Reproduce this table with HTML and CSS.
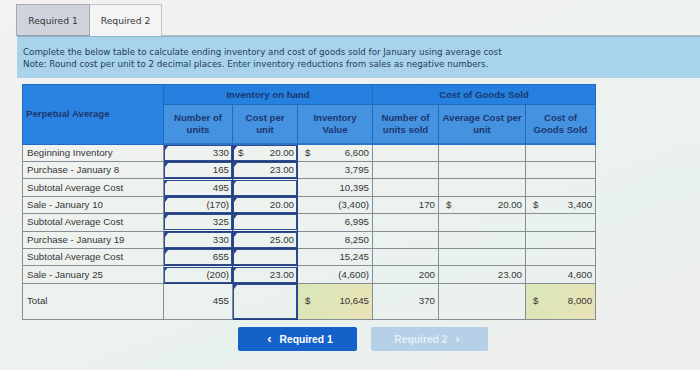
FILE: index.html
```html
<!DOCTYPE html>
<html>
<head>
<meta charset="utf-8">
<link rel="stylesheet" href="styles.css">
</head>
<body>
<div class="tabs">
  <div class="tab tab-off">Required 1</div>
  <div class="tab tab-on">Required 2</div>
  <div class="tab-rest"></div>
</div>
<div class="note">
  <p>Complete the below table to calculate ending inventory and cost of goods sold for January using average cost</p>
  <p>Note: Round cost per unit to 2 decimal places. Enter inventory reductions from sales as negative numbers.</p>
</div>
<table class="grid">
  <colgroup>
    <col class="c1"><col class="c2"><col class="c3"><col class="c4"><col class="c5"><col class="c6"><col class="c7">
  </colgroup>
  <thead>
    <tr class="h1">
      <th rowspan="2" class="left">Perpetual Average</th>
      <th colspan="3">Inventory on hand</th>
      <th colspan="3">Cost of Goods Sold</th>
    </tr>
    <tr class="h2">
      <th>Number of<br>units</th>
      <th>Cost per<br>unit</th>
      <th>Inventory<br>Value</th>
      <th>Number of<br>units sold</th>
      <th>Average Cost per<br>unit</th>
      <th>Cost of<br>Goods Sold</th>
    </tr>
  </thead>
  <tbody>
    <tr>
      <td class="lbl">Beginning Inventory</td>
      <td class="inp"><span class="fld">330</span></td>
      <td class="inp"><span class="fld"><span class="cur">$</span>20.00</span></td>
      <td class="num"><span class="cur">$</span>6,600</td>
      <td></td><td></td><td></td>
    </tr>
    <tr>
      <td class="lbl">Purchase - January 8</td>
      <td class="inp"><span class="fld">165</span></td>
      <td class="inp"><span class="fld">23.00</span></td>
      <td class="num">3,795</td>
      <td></td><td></td><td></td>
    </tr>
    <tr>
      <td class="lbl">Subtotal Average Cost</td>
      <td class="inp"><span class="fld">495</span></td>
      <td class="inp"><span class="fld"></span></td>
      <td class="num">10,395</td>
      <td></td><td></td><td></td>
    </tr>
    <tr>
      <td class="lbl">Sale - January 10</td>
      <td class="inp"><span class="fld">(170)</span></td>
      <td class="inp"><span class="fld">20.00</span></td>
      <td class="num">(3,400)</td>
      <td class="num">170</td>
      <td class="num"><span class="cur">$</span>20.00</td>
      <td class="num"><span class="cur">$</span>3,400</td>
    </tr>
    <tr>
      <td class="lbl">Subtotal Average Cost</td>
      <td class="inp"><span class="fld">325</span></td>
      <td class="inp"><span class="fld"></span></td>
      <td class="num">6,995</td>
      <td></td><td></td><td></td>
    </tr>
    <tr>
      <td class="lbl">Purchase - January 19</td>
      <td class="inp"><span class="fld">330</span></td>
      <td class="inp"><span class="fld">25.00</span></td>
      <td class="num">8,250</td>
      <td></td><td></td><td></td>
    </tr>
    <tr>
      <td class="lbl">Subtotal Average Cost</td>
      <td class="inp"><span class="fld">655</span></td>
      <td class="inp"><span class="fld"></span></td>
      <td class="num">15,245</td>
      <td></td><td></td><td></td>
    </tr>
    <tr>
      <td class="lbl">Sale - January 25</td>
      <td class="inp"><span class="fld">(200)</span></td>
      <td class="inp"><span class="fld">23.00</span></td>
      <td class="num">(4,600)</td>
      <td class="num">200</td>
      <td class="num">23.00</td>
      <td class="num">4,600</td>
    </tr>
    <tr class="total">
      <td class="lbl">Total</td>
      <td class="num">455</td>
      <td class="inp"><span class="fld"></span></td>
      <td class="num hl"><span class="cur">$</span>10,645</td>
      <td class="num">370</td>
      <td></td>
      <td class="num hl"><span class="cur">$</span>8,000</td>
    </tr>
  </tbody>
</table>
<div class="nav">
  <button class="btn btn-prev"><span class="chev">&lsaquo;</span> Required 1</button>
  <button class="btn btn-next">Required 2 <span class="chev">&rsaquo;</span></button>
</div>
</body>
</html>
```
FILE: styles.css
```css
html, body {
  margin: 0;
  padding: 0;
}
body {
  width: 700px;
  height: 370px;
  overflow: hidden;
  background: linear-gradient(160deg, #f3f1f1 0%, #eef2ef 40%, #e9f1ee 70%, #f1eeee 100%);
  font-family: "Liberation Sans", Arial, sans-serif;
  color: #333;
}
.tabs {
  display: flex;
  height: 32px;
  padding: 4px 0 0 16px;
}
.tab {
  width: 74px;
  height: 32px;
  box-sizing: border-box;
  display: flex;
  align-items: center;
  justify-content: center;
  font-family: "DejaVu Sans", Verdana, sans-serif;
  font-size: 9.2px;
  color: #363636;
}
.tab-off {
  background: #d1d3dc;
  border: 1px solid #a7a9b4;
  border-bottom: 1px solid #9aa0aa;
}
.tab-on {
  background: #f4f4f4;
  border: 1px solid #c3c3c6;
  border-left: none;
  border-bottom: none;
  width: 72px;
}
.tab-rest {
  flex: 1;
  border-bottom: 1px solid #b9bdc3;
}
.note {
  margin-left: 17px;
  height: 42px;
  box-sizing: border-box;
  padding: 9px 6px 0 6px;
  background: #a9d3ea;
  border-top: 1px solid #8fb4cc;
  font-family: "DejaVu Sans", Verdana, sans-serif;
  font-size: 8.7px;
  line-height: 12px;
  color: #22405c;
}
.note p {
  margin: 0;
}
.grid {
  margin: 6px 0 0 22px;
  width: 573px;
  border-collapse: collapse;
  table-layout: fixed;
  font-size: 9.7px;
}
.c1 { width: 141px; }
.c2 { width: 69px; }
.c3 { width: 65px; }
.c4 { width: 75px; }
.c5 { width: 66px; }
.c6 { width: 87px; }
.c7 { width: 70px; }
.grid th {
  background: #2580e0;
  color: #1c3770;
  font-weight: bold;
  font-size: 9.6px;
  line-height: 12px;
  border: 1px solid #1d6cc4;
  padding: 0;
  text-align: center;
}
.grid th.left {
  text-align: left;
  padding: 0 0 0 3px;
  background: #2a83e0;
}
.h1 th {
  height: 19px;
}
.h2 th {
  height: 38px;
  background: #4592e0;
  border-bottom: 2px solid #2a73c6;
}
.grid td {
  height: 17.4px;
  padding: 0 3px;
  box-sizing: border-box;
  border: 1px solid #858d96;
  color: #353535;
  white-space: nowrap;
  line-height: 14px;
}
.grid td.lbl {
  padding-left: 4px;
  color: #363636;
}
.grid td.num {
  text-align: right;
}
.cur {
  float: left;
  padding-left: 4px;
}
.grid td.inp {
  padding: 0;
  position: relative;
  border: 1px solid #243f7c;
}
.fld {
  display: block;
  box-sizing: border-box;
  height: 16px;
  line-height: 14px;
  padding: 0 2px 0 0;
  text-align: right;
  border: 1px solid #2e4c8e;
  border-left-width: 1.5px;
}
.grid td.inp::before {
  content: "";
  position: absolute;
  left: 1px;
  top: 1px;
  width: 0;
  height: 0;
  border-top: 4px solid #1f3f92;
  border-right: 3px solid transparent;
}
.total td {
  height: 36px;
}
.total td .fld {
  height: 35px;
}
.grid td.hl {
  background: linear-gradient(110deg, #d9e7b8 0%, #e9e2b6 100%);
}
.nav {
  display: flex;
  gap: 14px;
  padding: 7px 0 0 238px;
}
.btn {
  width: 119px;
  height: 24px;
  border: none;
  border-radius: 2px;
  font-family: "Liberation Sans", Arial, sans-serif;
  font-weight: bold;
  font-size: 10.3px;
  color: #ffffff;
  padding: 0;
}
.btn-prev {
  background: #1462c9;
}
.btn-next {
  width: 117px;
  background: #b6d0e8;
  color: #e4eef7;
}
.chev {
  font-size: 13px;
  margin: 0 5px;
}
```
